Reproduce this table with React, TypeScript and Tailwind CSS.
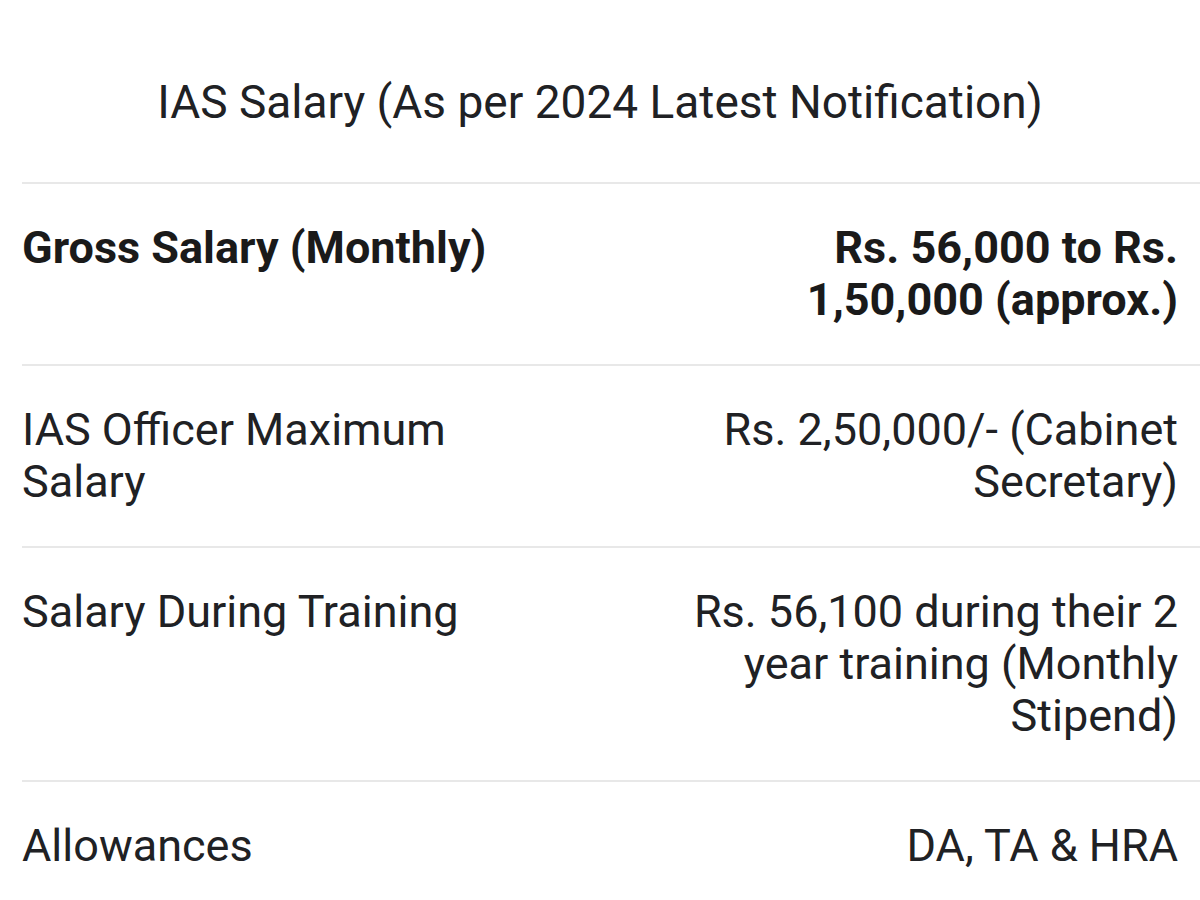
const rows = [
  { label: 'Gross Salary (Monthly)', value: 'Rs. 56,000 to Rs. 1,50,000 (approx.)', bold: true },
  { label: 'IAS Officer Maximum Salary', value: 'Rs. 2,50,000/- (Cabinet Secretary)' },
  { label: 'Salary During Training', value: 'Rs. 56,100 during their 2 year training (Monthly Stipend)' },
  { label: 'Allowances', value: 'DA, TA & HRA' },
];

export default function App() {
  return (
    <div className="min-h-screen bg-white text-[#202124] font-['Roboto','Liberation_Sans',sans-serif]">
      <h1 className="pt-[76px] pb-[54px] text-center text-[46px] leading-[52px] font-normal">
        IAS Salary (As per 2024 Latest Notification)
      </h1>

      <div className="ml-[22px]">
        {rows.map((row) => (
          <div
            key={row.label}
            className={`grid grid-cols-2 gap-32 border-t-2 border-[#e8e8e8] py-[38px] pr-[22px] text-[45px] leading-[52px] ${
              row.bold ? 'font-bold text-[#1a1a1a]' : 'font-normal'
            }`}
          >
            <div>{row.label}</div>
            <div className="text-right">{row.value}</div>
          </div>
        ))}
      </div>
    </div>
  );
}
